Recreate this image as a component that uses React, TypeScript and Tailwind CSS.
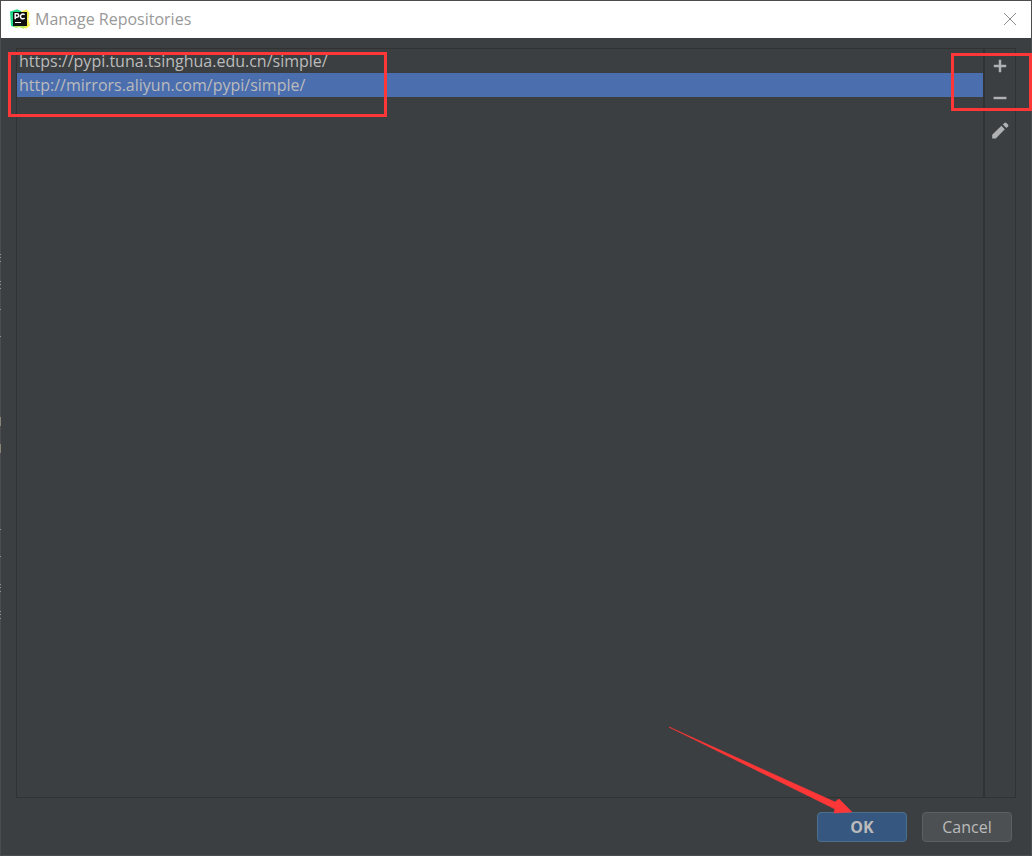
import { useState } from 'react';

const REPOSITORIES = [
  'https://pypi.tuna.tsinghua.edu.cn/simple/',
  'http://mirrors.aliyun.com/pypi/simple/',
];

const EDGE_MARKS = [254, 257, 261, 281, 284, 288, 309, 336, 529, 556, 584, 587, 591, 611, 614, 618];

function PyCharmIcon() {
  return (
    <svg width="20" height="20" viewBox="0 0 20 20" aria-hidden="true">
      <path d="M0 2.5 L2 2 L7 0.3 L11 2 L12 17 L6 18.5 L1 17 Z" fill="#21d789" />
      <path d="M11 2.5 L16.5 0.6 L19.6 4 L18.4 10 L20 16.5 L16 19.8 L10 17 Z" fill="#f5f04e" />
      <path d="M3 16.5 H16 L13.5 19.8 L9 18 L6 19 Z" fill="#b8ec5e" />
      <rect x="3" y="3" width="14" height="14" fill="#101010" />
      <path
        d="M5.2 10.3 V4.8 H7 A1.6 1.6 0 0 1 7 8.2 H5.2 M14.6 5.8 A2.4 2.4 0 1 0 14.6 9.1"
        fill="none"
        stroke="#fff"
        strokeWidth="1.5"
      />
      <rect x="5" y="13" width="6" height="1" fill="#fff" />
    </svg>
  );
}

function AddIcon() {
  return (
    <svg width="16" height="16" viewBox="0 0 16 16" aria-hidden="true">
      <path d="M7 2 H9 V7 H14 V9 H9 V14 H7 V9 H2 V7 H7 Z" fill="#afb1b3" stroke="#afb1b3" strokeWidth="0.5" />
    </svg>
  );
}

function RemoveIcon() {
  return (
    <svg width="16" height="16" viewBox="0 0 16 16" aria-hidden="true">
      <rect x="1.6" y="6.8" width="12.8" height="2.4" fill="#afb1b3" />
    </svg>
  );
}

function EditIcon() {
  return (
    <svg width="18" height="18" viewBox="0 0 18 18" aria-hidden="true">
      <path d="M1.2 12.8 L10.4 3.8 L13.8 7.2 L4.8 16.4 L1.2 16.6 Z" fill="#afb1b3" />
      <path d="M11.8 2.6 L13.4 0.9 Q14.4 0.2 15.4 0.9 L17 2.5 Q17.9 3.6 17 4.5 L15.3 6.1 Z" fill="#afb1b3" />
    </svg>
  );
}

export default function App() {
  const [selected, setSelected] = useState(1);

  return (
    <div className="relative flex min-h-screen flex-col border border-[#4b4c4e] bg-[#3c3f41] font-['Open_Sans','Noto_Sans_CJK_SC',sans-serif] text-base text-[#bbbbbb]">
      <header className="flex h-[37px] items-center gap-[5px] bg-white pr-[14px] pb-px pl-[9px]">
        <PyCharmIcon />
        <h1 className="flex-1 text-base text-[#999999]">Manage Repositories</h1>
        <button type="button" aria-label="Close">
          <svg width="14" height="14" viewBox="0 0 14 14" aria-hidden="true">
            <path d="M1 1 L13 13 M13 1 L1 13" stroke="#8c8c8c" />
          </svg>
        </button>
      </header>

      <main className="flex flex-1 flex-col px-[15px] pt-[10px] pb-[13px]">
        <div className="relative flex flex-1 border border-[#323232]">
          <ul className="flex-1">
            {REPOSITORIES.map((url, index) => (
              <li key={url}>
                <button
                  type="button"
                  onClick={() => setSelected(index)}
                  className={`flex h-6 w-full items-center px-[2px] text-left ${index === selected ? 'bg-[#4b6eaf]' : ''}`}
                >
                  {url}
                </button>
              </li>
            ))}
          </ul>
          <div className="flex w-8 flex-col items-center gap-4 border-l-2 border-[#323232] pt-[9px]">
            <button type="button" aria-label="Add">
              <AddIcon />
            </button>
            <button type="button" aria-label="Remove">
              <RemoveIcon />
            </button>
            <button type="button" aria-label="Edit">
              <EditIcon />
            </button>
          </div>

          {/* highlight frames */}
          <div className="pointer-events-none absolute top-[3px] -left-[9px] h-[65px] w-[379px] border-3 border-[#fd3737]" />
          <div className="pointer-events-none absolute top-1 -right-[17px] h-[58px] w-[81px] border-3 border-[#fd3737]" />
        </div>

        <footer className="mt-[14px] flex justify-end gap-[15px] pr-1">
          <div className="relative">
            <button
              type="button"
              className="h-[30px] w-[90px] rounded-[4px] border border-[#4c708c] bg-[#365880] font-bold"
            >
              OK
            </button>
            <svg
              className="pointer-events-none absolute right-[55px] bottom-[28px]"
              width="184"
              height="88"
              viewBox="0 0 184 88"
              aria-hidden="true"
            >
              <path d="M1 1 L167 76 L171 73 L184 86 L166 87 L167 83 Z" fill="#fd3737" stroke="#fd3737" strokeWidth="0.6" />
            </svg>
          </div>
          <button type="button" className="h-[30px] w-[90px] rounded-[4px] border border-[#5e6060] bg-[#4c5052]">
            Cancel
          </button>
        </footer>
      </main>

      {/* slivers of the editor behind the dialog */}
      <svg className="pointer-events-none absolute top-0 -left-px" width="1" height="640" aria-hidden="true">
        {EDGE_MARKS.map((y) => (
          <rect key={y} y={y - 1} width="1" height="1" fill="#8f9193" />
        ))}
        <rect y="416" width="1" height="9" fill="#8a8478" />
        <rect y="443" width="1" height="9" fill="#8a8478" />
      </svg>
    </div>
  );
}
